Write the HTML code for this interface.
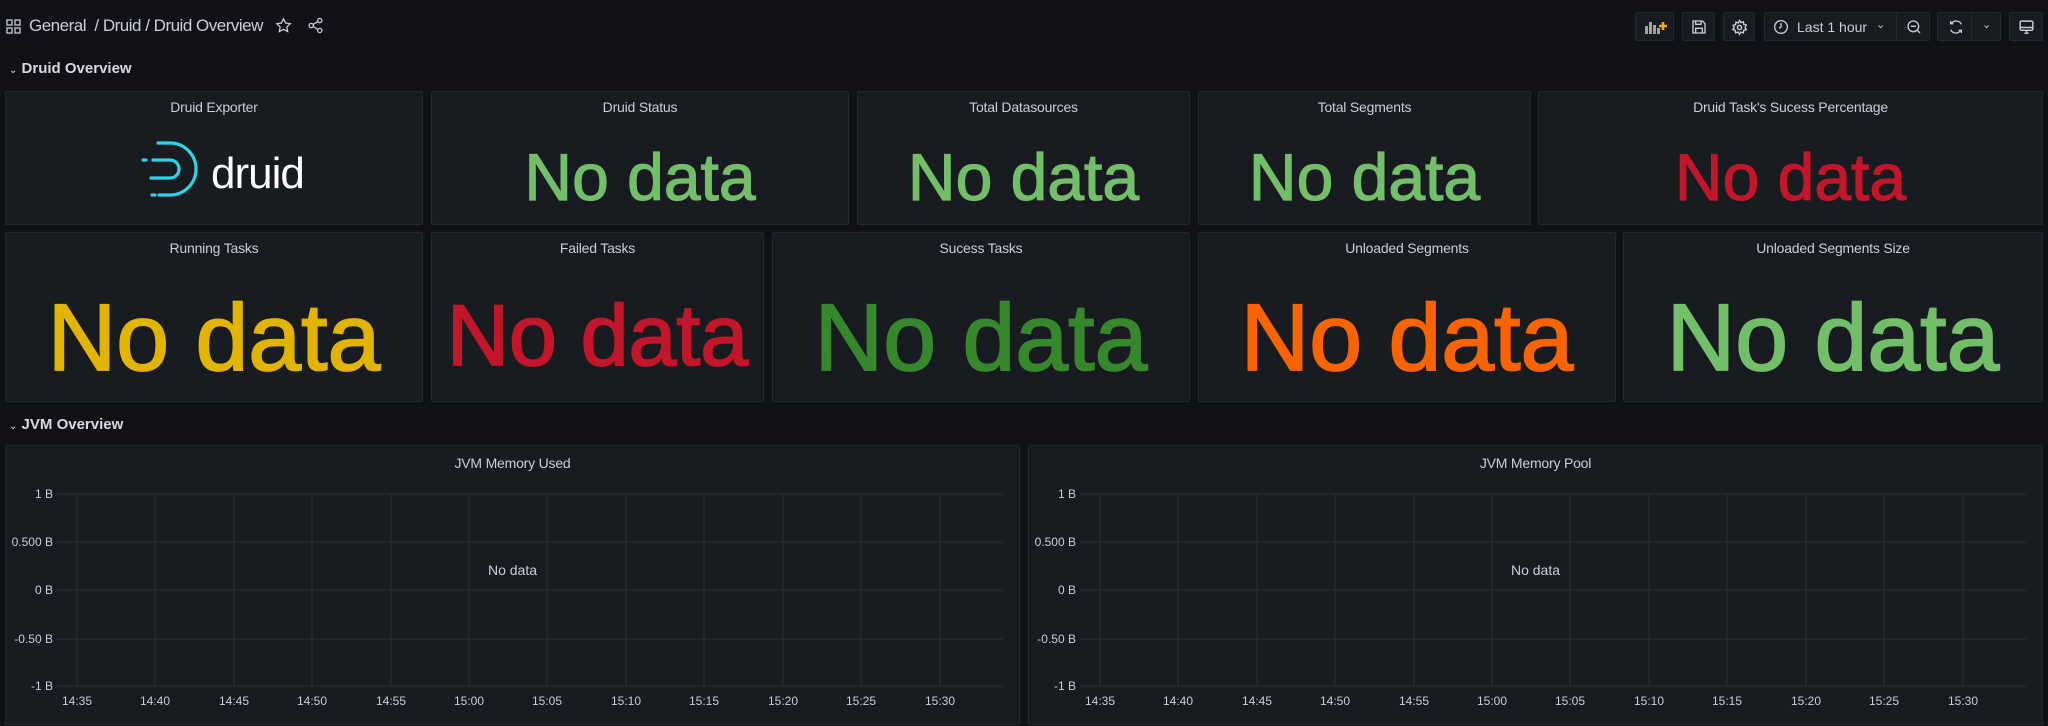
<!DOCTYPE html>
<html><head><meta charset="utf-8"><style>
*{box-sizing:border-box;margin:0;padding:0}
body{width:2048px;height:723px;background:#111217;font-family:"Liberation Sans",sans-serif;color:#ccccdc;position:relative;overflow:hidden}
.a{position:absolute}
.p{position:absolute;background:#181b1f;border:1px solid #24272e;border-radius:2px}
.t{position:absolute;left:0;right:0;top:7px;text-align:center;font-size:14px;color:#ccccdc;letter-spacing:-0.2px}
.v{position:absolute;left:0;right:0;text-align:center;line-height:1em;white-space:nowrap}
.v1{-webkit-text-stroke:1.2px currentColor}
.v2{-webkit-text-stroke:1.8px currentColor}
.btn{position:absolute;top:12px;height:29px;border:1px solid #24272e;background:#181b1f;border-radius:2px}
.row{position:absolute;left:9px;font-size:15px;color:#d8d9e0;font-weight:bold}
.yl{position:absolute;font-size:12px;color:#ccccdc;text-align:right;width:50px}
.xl{position:absolute;font-size:12px;color:#ccccdc;width:40px;text-align:center;margin-left:-20px}
</style></head><body>
<svg class="a" style="left:6px;top:19px" width="15" height="15" viewBox="0 0 15 15" fill="none" stroke="#ccccdc" stroke-width="1.3"><rect x="1" y="1" width="5" height="5"/><rect x="9" y="1" width="5" height="5"/><rect x="1" y="9" width="5" height="5"/><rect x="9" y="9" width="5" height="5"/></svg>
<div class="a" style="left:29px;top:16px;font-size:17px;letter-spacing:-0.5px;color:#ccccdc;white-space:nowrap">General &nbsp;/ Druid / Druid Overview</div>
<svg class="a" style="left:275px;top:17px" width="17" height="17" viewBox="0 0 24 24" fill="none" stroke="#ccccdc" stroke-width="1.8"><path d="M12 2.5l2.9 6 6.6.9-4.8 4.6 1.2 6.5L12 17.4l-5.9 3.1 1.2-6.5L2.5 9.4l6.6-.9z"/></svg>
<svg class="a" style="left:307px;top:17px" width="17" height="17" viewBox="0 0 24 24" fill="none" stroke="#ccccdc" stroke-width="1.8"><circle cx="18" cy="5" r="3"/><circle cx="6" cy="12" r="3"/><circle cx="18" cy="19" r="3"/><path d="M8.6 13.5l6.8 4M15.4 6.5l-6.8 4"/></svg>

<div class="btn" style="left:1635px;width:39px"><svg class="a" style="left:8px;top:6px" width="24" height="16" viewBox="0 0 24 16"><rect x="1" y="7" width="3" height="8" fill="#9fa1a8"/><rect x="5" y="3" width="3" height="12" fill="#9fa1a8"/><rect x="9" y="6" width="3" height="9" fill="#9fa1a8"/><rect x="13" y="9" width="3" height="6" fill="#9fa1a8"/><path d="M19 3v8M15 7h8" stroke="#f5a623" stroke-width="2.6"/></svg></div>
<div class="btn" style="left:1682px;width:33px"><svg class="a" style="left:8px;top:6px" width="16" height="16" viewBox="0 0 24 24" fill="none" stroke="#ccccdc" stroke-width="2"><path d="M4 3h13l4 4v14H3V3z"/><path d="M7 3v5h8V3M7 21v-7h10v7"/></svg></div>
<div class="btn" style="left:1723px;width:32px"><svg class="a" style="left:7px;top:6px" width="17" height="17" viewBox="0 0 24 24" fill="none" stroke="#ccccdc" stroke-width="2"><circle cx="12" cy="12" r="3"/><path d="M12 2l2 3 3.5-1 .5 3.5 3.5 1-1.5 3.5 1.5 3-3.5 1-.5 3.5-3.5-1-2 3-2-3-3.5 1-.5-3.5-3.5-1L4.5 12 3 9l3.5-1L7 4.5l3.5 1z"/></svg></div>
<div class="btn" style="left:1764px;width:166px">
<svg class="a" style="left:8px;top:6px" width="16" height="16" viewBox="0 0 24 24" fill="none" stroke="#ccccdc" stroke-width="2"><circle cx="12" cy="12" r="9.5"/><path d="M12 6v6l-3 2"/></svg>
<div class="a" style="left:32px;top:6px;font-size:14px;color:#ccccdc">Last 1 hour</div>
<div class="a" style="left:111px;top:5px;font-size:11px;color:#ccccdc">&#8964;</div>
<div class="a" style="left:131px;top:0;width:1px;height:27px;background:#24272e"></div>
<svg class="a" style="left:141px;top:6px" width="16" height="16" viewBox="0 0 24 24" fill="none" stroke="#ccccdc" stroke-width="2"><circle cx="11" cy="11" r="8"/><path d="M7 11h8M17 17l4 4"/></svg></div>
<div class="btn" style="left:1937px;width:64px">
<svg class="a" style="left:10px;top:6px" width="16" height="16" viewBox="0 0 24 24" fill="none" stroke="#ccccdc" stroke-width="2"><path d="M20 8a8.5 8.5 0 0 0-15-1M4 16a8.5 8.5 0 0 0 15 1M4 3v4h4M20 21v-4h-4"/></svg>
<div class="a" style="left:33px;top:0;width:1px;height:27px;background:#24272e"></div>
<div class="a" style="left:44px;top:5px;font-size:11px;color:#ccccdc">&#8964;</div></div>
<div class="btn" style="left:2009px;width:34px"><svg class="a" style="left:8px;top:6px" width="17" height="17" viewBox="0 0 24 24" fill="none" stroke="#ccccdc" stroke-width="2"><rect x="3" y="3" width="18" height="13" rx="2"/><path d="M3 12h18M9 20h6M12 16v4"/></svg></div>

<div class="row" style="top:60px"><span style="font-size:10px;font-weight:normal">&#8964;</span> Druid Overview</div>

<div class="p" style="left:5px;top:91px;width:418px;height:134px"><div class="t">Druid Exporter</div>
<svg class="a" style="left:132px;top:48px" width="170" height="62" viewBox="0 0 170 62" fill="none" stroke="#2ad5e8" stroke-width="3.2" stroke-linecap="round"><path d="M20 3h12a26 26 0 0 1 0 52h-11"/><path d="M5 20h3M15 20h17a9 9 0 0 1 0 18H13"/><path d="M14 55h3"/><text x="73" y="48" fill="#fff" stroke="none" font-size="44" font-family="Liberation Sans" letter-spacing="-1">druid</text></svg>
</div>
<div class="p" style="left:431px;top:91px;width:418px;height:134px"><div class="t">Druid Status</div><div class="v v1" style="top:52px;font-size:66px;color:#73bf69">No data</div></div>
<div class="p" style="left:857px;top:91px;width:333px;height:134px"><div class="t">Total Datasources</div><div class="v v1" style="top:52px;font-size:66px;color:#73bf69">No data</div></div>
<div class="p" style="left:1198px;top:91px;width:333px;height:134px"><div class="t">Total Segments</div><div class="v v1" style="top:52px;font-size:66px;color:#73bf69">No data</div></div>
<div class="p" style="left:1538px;top:91px;width:505px;height:134px"><div class="t">Druid Task's Sucess Percentage</div><div class="v v1" style="top:52px;font-size:66px;color:#c4162a">No data</div></div>

<div class="p" style="left:5px;top:232px;width:418px;height:170px"><div class="t">Running Tasks</div><div class="v v2" style="top:58px;font-size:95px;color:#e0b400">No data</div></div>
<div class="p" style="left:431px;top:232px;width:333px;height:170px"><div class="t">Failed Tasks</div><div class="v v2" style="top:60px;font-size:86px;color:#c4162a">No data</div></div>
<div class="p" style="left:772px;top:232px;width:418px;height:170px"><div class="t">Sucess Tasks</div><div class="v v2" style="top:58px;font-size:95px;color:#37872d">No data</div></div>
<div class="p" style="left:1198px;top:232px;width:418px;height:170px"><div class="t">Unloaded Segments</div><div class="v v2" style="top:58px;font-size:95px;color:#fa6400">No data</div></div>
<div class="p" style="left:1623px;top:232px;width:420px;height:170px"><div class="t">Unloaded Segments Size</div><div class="v v2" style="top:58px;font-size:95px;color:#73bf69">No data</div></div>

<div class="row" style="top:416px"><span style="font-size:10px;font-weight:normal">&#8964;</span> JVM Overview</div>

<div class="p" style="left:5px;top:445px;width:1015px;height:280px"><div class="t" style="top:9px">JVM Memory Used</div>
<svg class="a" style="left:0;top:0" width="1015" height="280"><g stroke="#2c2f35" stroke-width="1">
<line x1="51" x2="997" y1="48" y2="48"/><line x1="51" x2="997" y1="96" y2="96"/><line x1="51" x2="997" y1="144" y2="144"/><line x1="51" x2="997" y1="193" y2="193"/><line x1="51" x2="997" y1="240" y2="240"/>
<line x1="71" x2="71" y1="48" y2="240"/><line x1="149" x2="149" y1="48" y2="240"/><line x1="228" x2="228" y1="48" y2="240"/><line x1="306" x2="306" y1="48" y2="240"/><line x1="385" x2="385" y1="48" y2="240"/><line x1="463" x2="463" y1="48" y2="240"/><line x1="541" x2="541" y1="48" y2="240"/><line x1="620" x2="620" y1="48" y2="240"/><line x1="698" x2="698" y1="48" y2="240"/><line x1="777" x2="777" y1="48" y2="240"/><line x1="855" x2="855" y1="48" y2="240"/><line x1="934" x2="934" y1="48" y2="240"/></g></svg>
<div class="yl" style="left:-3px;top:41px">1 B</div><div class="yl" style="left:-3px;top:89px">0.500 B</div><div class="yl" style="left:-3px;top:137px">0 B</div><div class="yl" style="left:-3px;top:186px">-0.50 B</div><div class="yl" style="left:-3px;top:233px">-1 B</div>
<div class="xl" style="left:71px;top:248px">14:35</div><div class="xl" style="left:149px;top:248px">14:40</div><div class="xl" style="left:228px;top:248px">14:45</div><div class="xl" style="left:306px;top:248px">14:50</div><div class="xl" style="left:385px;top:248px">14:55</div><div class="xl" style="left:463px;top:248px">15:00</div><div class="xl" style="left:541px;top:248px">15:05</div><div class="xl" style="left:620px;top:248px">15:10</div><div class="xl" style="left:698px;top:248px">15:15</div><div class="xl" style="left:777px;top:248px">15:20</div><div class="xl" style="left:855px;top:248px">15:25</div><div class="xl" style="left:934px;top:248px">15:30</div>
<div class="a" style="left:0;right:0;top:116px;text-align:center;font-size:14px">No data</div>
</div>

<div class="p" style="left:1028px;top:445px;width:1015px;height:280px"><div class="t" style="top:9px">JVM Memory Pool</div>
<svg class="a" style="left:0;top:0" width="1015" height="280"><g stroke="#2c2f35" stroke-width="1">
<line x1="51" x2="997" y1="48" y2="48"/><line x1="51" x2="997" y1="96" y2="96"/><line x1="51" x2="997" y1="144" y2="144"/><line x1="51" x2="997" y1="193" y2="193"/><line x1="51" x2="997" y1="240" y2="240"/>
<line x1="71" x2="71" y1="48" y2="240"/><line x1="149" x2="149" y1="48" y2="240"/><line x1="228" x2="228" y1="48" y2="240"/><line x1="306" x2="306" y1="48" y2="240"/><line x1="385" x2="385" y1="48" y2="240"/><line x1="463" x2="463" y1="48" y2="240"/><line x1="541" x2="541" y1="48" y2="240"/><line x1="620" x2="620" y1="48" y2="240"/><line x1="698" x2="698" y1="48" y2="240"/><line x1="777" x2="777" y1="48" y2="240"/><line x1="855" x2="855" y1="48" y2="240"/><line x1="934" x2="934" y1="48" y2="240"/></g></svg>
<div class="yl" style="left:-3px;top:41px">1 B</div><div class="yl" style="left:-3px;top:89px">0.500 B</div><div class="yl" style="left:-3px;top:137px">0 B</div><div class="yl" style="left:-3px;top:186px">-0.50 B</div><div class="yl" style="left:-3px;top:233px">-1 B</div>
<div class="xl" style="left:71px;top:248px">14:35</div><div class="xl" style="left:149px;top:248px">14:40</div><div class="xl" style="left:228px;top:248px">14:45</div><div class="xl" style="left:306px;top:248px">14:50</div><div class="xl" style="left:385px;top:248px">14:55</div><div class="xl" style="left:463px;top:248px">15:00</div><div class="xl" style="left:541px;top:248px">15:05</div><div class="xl" style="left:620px;top:248px">15:10</div><div class="xl" style="left:698px;top:248px">15:15</div><div class="xl" style="left:777px;top:248px">15:20</div><div class="xl" style="left:855px;top:248px">15:25</div><div class="xl" style="left:934px;top:248px">15:30</div>
<div class="a" style="left:0;right:0;top:116px;text-align:center;font-size:14px">No data</div>
</div>
</body></html>
